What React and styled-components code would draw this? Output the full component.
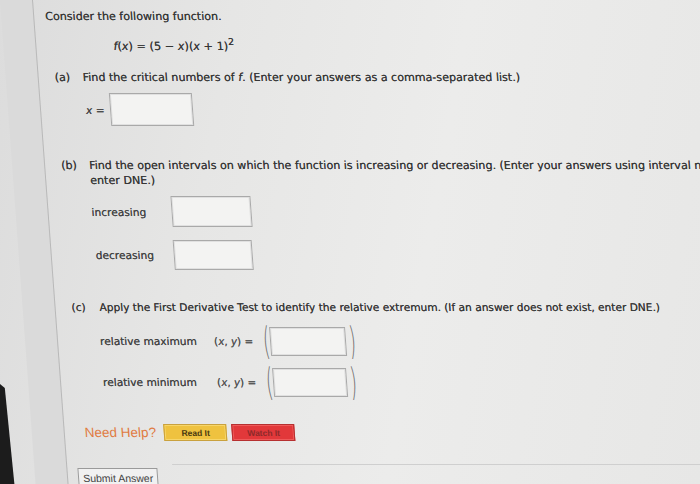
import styled, { createGlobalStyle } from "styled-components";

const GlobalStyle = createGlobalStyle`
  html, body {
    margin: 0;
    padding: 0;
    background: #d8d8d8;
  }
  * {
    box-sizing: border-box;
  }
`;

const Screen = styled.div`
  position: relative;
  width: 700px;
  height: 484px;
  overflow: hidden;
  background: linear-gradient(100deg, #dcdcdc 0%, #e6e6e5 30%, #ececeb 60%, #e7e7e6 100%);
`;

const Sheet = styled.div`
  display: flex;
  height: 520px;
  transform: skewX(4.2deg);
  transform-origin: top left;
`;

const Gutter = styled.div`
  width: 33px;
  flex-shrink: 0;
  background: #dadada;
  border-right: 1px solid #b9b9b9;
`;

const Content = styled.div`
  flex: 1;
  min-width: 0;
  padding: 10px 0 0 11px;
  font-family: "DejaVu Sans", Verdana, sans-serif;
  font-size: 11.1px;
  color: #363636;
  text-shadow: 0 0 0.4px #555;
  display: flex;
  flex-direction: column;
`;

const Line = styled.div`
  white-space: nowrap;
  line-height: 14px;
`;

const Formula = styled.div`
  margin: 16px 0 0 66px;
  font-size: 11.3px;
  line-height: 14px;
  white-space: nowrap;
  sup {
    font-size: 9.5px;
    vertical-align: 5px;
    line-height: 0;
  }
`;

const Part = styled.div`
  display: flex;
  margin-top: ${(p) => p.top}px;
  font-size: ${(p) => p.size || 11.1}px;
`;

const PartLabel = styled.span`
  width: 28px;
  flex-shrink: 0;
  margin-left: 5px;
  white-space: nowrap;
  line-height: 15px;
`;

const PartBody = styled.div`
  display: flex;
  flex-direction: column;
  line-height: 15px;
  white-space: nowrap;
`;

const AnswerRow = styled.div`
  display: flex;
  align-items: center;
  margin-top: ${(p) => p.top}px;
  margin-left: ${(p) => p.indent}px;
`;

const RowLabel = styled.span`
  width: ${(p) => p.width}px;
  flex-shrink: 0;
  white-space: nowrap;
  color: #444;
  font-size: 10.6px;
`;

const InputBox = styled.div`
  width: ${(p) => p.w}px;
  height: ${(p) => p.h}px;
  background: #f3f3f2;
  border: 1px solid #a9a9a9;
  box-shadow: inset 0 0 0 1px #e0e0e0;
`;

const Paren = styled.span`
  font-family: "DejaVu Sans", sans-serif;
  font-size: 38px;
  font-weight: 200;
  line-height: 30px;
  color: #6a6a6a;
  text-shadow: none;
  transform: scaleX(0.45);
  display: inline-block;
  margin: ${(p) => (p.close ? "0 0 0 -1px" : "0 -4px 0 -5px")};
`;

const Coord = styled.span`
  width: 50px;
  flex-shrink: 0;
  color: #555;
  font-size: 10.4px;
  white-space: nowrap;
`;

const HelpRow = styled.div`
  display: flex;
  align-items: center;
  margin: 27px 0 0 9px;
  gap: 5px;
`;

const HelpText = styled.span`
  font-family: "Liberation Sans", Arial, sans-serif;
  font-size: 13.5px;
  color: #e07b42;
  text-shadow: none;
  margin-right: 3px;
`;

const HelpButton = styled.div`
  width: 63px;
  height: 17px;
  display: flex;
  align-items: center;
  justify-content: center;
  font-family: "Liberation Sans", Arial, sans-serif;
  font-size: 8.5px;
  font-weight: bold;
  text-shadow: none;
  color: ${(p) => (p.red ? "#8e2a2a" : "#4a3a10")};
  background: ${(p) => (p.red ? "#e2383a" : "#efc23f")};
  border: 1px solid ${(p) => (p.red ? "#b63030" : "#c9a13e")};
  box-shadow: inset 0 0 0 1px ${(p) => (p.red ? "#ef5a5a" : "#f7d66a")};
`;

const SubmitArea = styled.div`
  display: flex;
  margin-top: 27px;
`;

const SubmitButton = styled.div`
  height: 19px;
  padding: 0 4px;
  display: flex;
  align-items: center;
  font-family: "Liberation Sans", Arial, sans-serif;
  font-size: 10.5px;
  text-shadow: none;
  color: #444;
  background: #f1f1f1;
  border: 1px solid #9a9a9a;
  white-space: nowrap;
  margin-left: -1px;
`;

const Divider = styled.div`
  flex: 1;
  margin-left: 15px;
  border-top: 1px solid #cfcfcf;
  margin-top: -4px;
`;

const Bezel = styled.div`
  position: absolute;
  left: 0;
  bottom: 0;
  width: 16px;
  height: 100px;
  background: #1c1c1c;
  clip-path: polygon(0 0, 30% 4%, 90% 100%, 0 100%);
`;

export default function App() {
  return (
    <Screen>
      <GlobalStyle />
      <Sheet>
        <Gutter />
        <Content>
          <Line>Consider the following function.</Line>
          <Formula>
            <i>f</i>(<i>x</i>) = (5 − <i>x</i>)(<i>x</i> + 1)<sup>2</sup>
          </Formula>
          <Part top={16}>
            <PartLabel>(a)</PartLabel>
            <PartBody>
              <span>
                Find the critical numbers of <i>f</i>. (Enter your answers as a comma-separated list.)
              </span>
            </PartBody>
          </Part>
          <AnswerRow top={8} indent={34}>
            <RowLabel width={24}>
              <i>x</i> =
            </RowLabel>
            <InputBox w={83} h={33} />
          </AnswerRow>

          <Part top={32}>
            <PartLabel>(b)</PartLabel>
            <PartBody>
              <span>
                Find the open intervals on which the function is increasing or decreasing. (Enter your answers using interval notation. If an answer does not exist,
              </span>
              <span>enter DNE.)</span>
            </PartBody>
          </Part>
          <AnswerRow top={8} indent={32}>
            <RowLabel width={80}>increasing</RowLabel>
            <InputBox w={80} h={31} />
          </AnswerRow>
          <AnswerRow top={13} indent={33}>
            <RowLabel width={78}>decreasing</RowLabel>
            <InputBox w={79} h={30} />
          </AnswerRow>

          <Part top={30} size={10.6}>
            <PartLabel>(c)</PartLabel>
            <PartBody>
              <span>
                Apply the First Derivative Test to identify the relative extremum. (If an answer does not exist, enter DNE.)
              </span>
            </PartBody>
          </Part>
          <AnswerRow top={11} indent={31}>
            <RowLabel width={114}>relative maximum</RowLabel>
            <Coord>
              (<i>x</i>, <i>y</i>) =
            </Coord>
            <Paren>(</Paren>
            <InputBox w={76} h={29} />
            <Paren close>)</Paren>
          </AnswerRow>
          <AnswerRow top={11} indent={31}>
            <RowLabel width={114}>relative minimum</RowLabel>
            <Coord>
              (<i>x</i>, <i>y</i>) =
            </Coord>
            <Paren>(</Paren>
            <InputBox w={74} h={29} />
            <Paren close>)</Paren>
          </AnswerRow>

          <HelpRow>
            <HelpText>Need Help?</HelpText>
            <HelpButton>Read It</HelpButton>
            <HelpButton red>Watch It</HelpButton>
          </HelpRow>

          <SubmitArea>
            <SubmitButton>Submit Answer</SubmitButton>
            <Divider />
          </SubmitArea>
        </Content>
      </Sheet>
      <Bezel />
    </Screen>
  );
}
